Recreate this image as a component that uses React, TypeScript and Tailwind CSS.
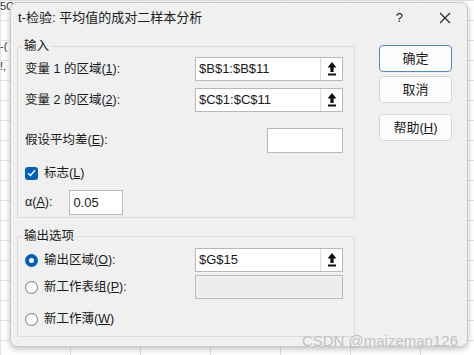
import React from 'react';

const font = "font-['Liberation_Sans','Noto_Sans_CJK_SC',sans-serif]";

function PickButton() {
  return (
    <div className="w-[22px] h-[22px] bg-white border-l border-[#dcdcdc] flex items-center justify-center">
      <svg width="10" height="14" viewBox="0 0 10 14">
        <path d="M5 0 L9.5 5.5 H6.6 V10 H3.4 V5.5 H0.5 Z" fill="#111" />
        <rect x="1" y="11.5" width="8" height="2" fill="#111" />
      </svg>
    </div>
  );
}

function RangeInput({ value }: { value: string }) {
  return (
    <div className="w-[148px] h-[24px] bg-white border border-[#b9b9b9] flex items-center justify-between">
      <span className="pl-[3px] text-[13px] text-[#1a1a1a]">{value}</span>
      <PickButton />
    </div>
  );
}

function Radio({ on }: { on?: boolean }) {
  return on ? (
    <span className="w-[13px] h-[13px] rounded-full bg-[#005fb8] flex items-center justify-center">
      <span className="w-[5px] h-[5px] rounded-full bg-white" />
    </span>
  ) : (
    <span className="w-[13px] h-[13px] rounded-full border border-[#7a7a7a] bg-[#fbfbfb]" />
  );
}

export default function App() {
  return (
    <div
      className={`relative w-[474px] h-[355px] overflow-hidden bg-white bg-[linear-gradient(#e2e2e2_1px,transparent_1px),linear-gradient(90deg,#e2e2e2_1px,transparent_1px)] bg-[size:70px_20px] ${font}`}
    >
      {/* cells peeking from the sheet */}
      <div className="flex flex-col text-[11px] text-[#333] leading-[20px] -mt-[4px]">
        <span>5C</span>
        <span>&nbsp;</span>
        <span>-(</span>
        <span>!,</span>
      </div>

      {/* Dialog */}
      <div className="absolute left-[10px] top-[2px] w-[458px] h-[345px] bg-[#f0f0f0] border border-[#c9c9c9] rounded-[7px] shadow-[0_2px_6px_rgba(0,0,0,0.25)] flex flex-col">
        {/* Title bar */}
        <div className="h-[29px] flex items-center justify-between pl-[7px] pr-[16px] text-[13px] text-[#1a1a1a]">
          <span>t-检验: 平均值的成对二样本分析</span>
          <div className="flex items-center gap-[36px]">
            <span className="text-[13px]">?</span>
            <svg width="12" height="12" viewBox="0 0 12 12">
              <path d="M1 1 L11 11 M11 1 L1 11" stroke="#222" strokeWidth="1.1" />
            </svg>
          </div>
        </div>

        <div className="flex pl-[6px] pt-[14px]">
          {/* Left column */}
          <div className="flex flex-col w-[338px] text-[12.5px] text-[#1a1a1a]">
            {/* Input group */}
            <div className="relative h-[172px] border border-[#dcdcdc] rounded-[2px] flex flex-col pl-[7px] pr-[11px] pt-[10px]">
              <span className="absolute -top-[10px] left-[4px] px-[2px] bg-[#f0f0f0] leading-[18px]">输入</span>
              <div className="h-[24px] flex items-center justify-between">
                <span>变量 1 的区域(<span className="underline">1</span>):</span>
                <RangeInput value="$B$1:$B$11" />
              </div>
              <div className="h-[24px] mt-[7px] flex items-center justify-between">
                <span>变量 2 的区域(<span className="underline">2</span>):</span>
                <RangeInput value="$C$1:$C$11" />
              </div>
              <div className="h-[25px] mt-[16px] flex items-center justify-between">
                <span>假设平均差(<span className="underline">E</span>):</span>
                <div className="w-[76px] h-[25px] bg-white border border-[#b9b9b9]" />
              </div>
              <div className="h-[20px] mt-[10px] flex items-center gap-[6px]">
                <span className="w-[13px] h-[13px] rounded-[3px] bg-[#005fb8] flex items-center justify-center">
                  <svg width="9" height="8" viewBox="0 0 9 8">
                    <path d="M1 4.2 L3.4 6.5 L8 1.3" stroke="white" strokeWidth="1.4" fill="none" />
                  </svg>
                </span>
                <span>标志(<span className="underline">L</span>)</span>
              </div>
              <div className="h-[25px] mt-[7px] flex items-center gap-[17px]">
                <span>α(<span className="underline">A</span>):</span>
                <div className="w-[54px] h-[25px] bg-white border border-[#b9b9b9] flex items-center pl-[3px] text-[13px]">0.05</div>
              </div>
            </div>

            {/* Output group */}
            <div className="relative h-[101px] mt-[18px] border border-[#dcdcdc] rounded-[2px] flex flex-col pl-[7px] pr-[11px] pt-[11px]">
              <span className="absolute -top-[10px] left-[4px] px-[2px] bg-[#f0f0f0] leading-[18px]">输出选项</span>
              <div className="h-[24px] flex items-center justify-between">
                <div className="flex items-center gap-[6px]">
                  <Radio on />
                  <span>输出区域(<span className="underline">O</span>):</span>
                </div>
                <RangeInput value="$G$15" />
              </div>
              <div className="h-[24px] mt-[3px] flex items-center justify-between">
                <div className="flex items-center gap-[6px]">
                  <Radio />
                  <span>新工作表组(<span className="underline">P</span>):</span>
                </div>
                <div className="w-[148px] h-[24px] border border-[#b9b9b9] bg-[#f0f0f0] p-[2px]">
                  <div className="w-full h-full bg-[#ececec]" />
                </div>
              </div>
              <div className="h-[24px] mt-[8px] flex items-center gap-[6px]">
                <Radio />
                <span>新工作薄(<span className="underline">W</span>)</span>
              </div>
            </div>
          </div>

          {/* Buttons */}
          <div className="flex flex-col ml-[24px] text-[13px] text-[#1a1a1a]">
            <button className="w-[73px] h-[27px] -mt-[1px] bg-[#fdfdfd] border border-[#4f89c3] rounded-[4px]">确定</button>
            <button className="w-[73px] h-[27px] mt-[4px] bg-[#fdfdfd] border border-[#d6d6d6] rounded-[4px]">取消</button>
            <button className="w-[73px] h-[27px] mt-[11px] bg-[#fdfdfd] border border-[#d6d6d6] rounded-[4px]">
              帮助(<span className="underline">H</span>)
            </button>
          </div>
        </div>
      </div>

      {/* Watermark */}
      <span className="absolute right-[16px] bottom-[6px] text-[15px] leading-[16px] text-[#c2c2c2]">
        CSDN @maizeman126
      </span>
    </div>
  );
}
